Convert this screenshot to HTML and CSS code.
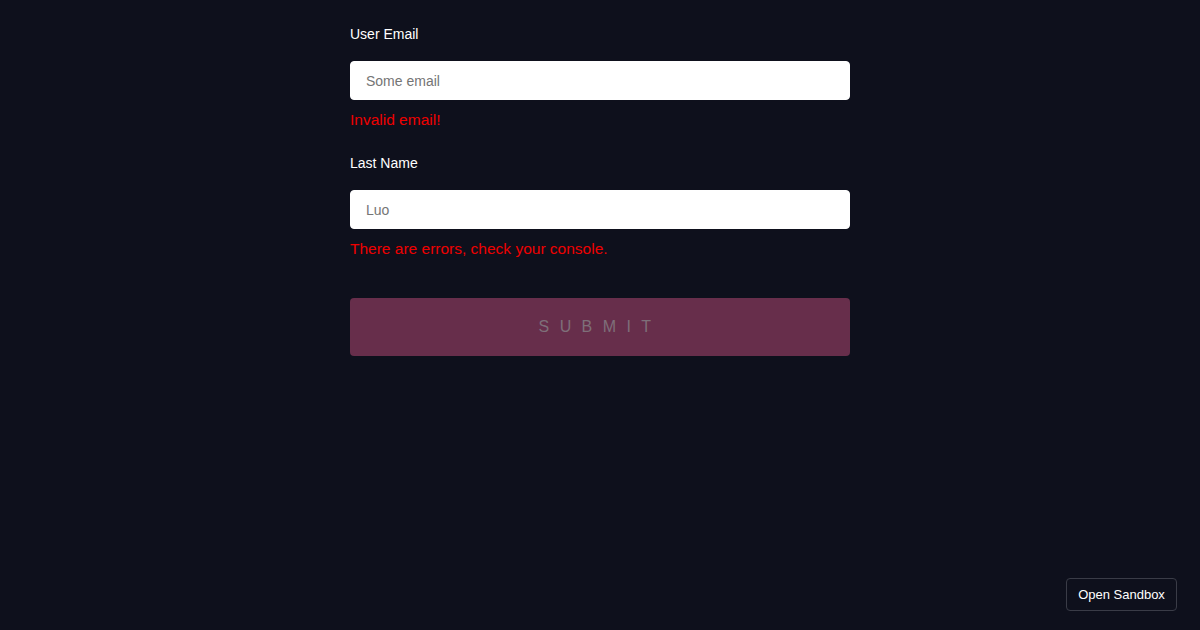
FILE: index.html
```html
<!DOCTYPE html>
<html>
<head>
<meta charset="utf-8">
<link rel="stylesheet" href="styles.css">
</head>
<body>
<form class="form">
  <label class="label">User Email</label>
  <input class="input" type="text" placeholder="Some email">
  <p class="error">Invalid email!</p>
  <label class="label">Last Name</label>
  <input class="input" type="text" placeholder="Luo">
  <p class="error">There are errors, check your console.</p>
  <button class="submit" type="button">Submit</button>
</form>
<button class="sandbox" type="button">Open Sandbox</button>
</body>
</html>
```
FILE: styles.css
```css
html, body {
  margin: 0;
  padding: 0;
  background: #0e101c;
  font-family: "Liberation Sans", Arial, sans-serif;
  height: 100%;
}
.form {
  width: 500px;
  margin: 0 auto;
  display: flex;
  flex-direction: column;
}
.label {
  display: block;
  color: #ffffff;
  font-size: 14px;
  line-height: 28px;
  margin-top: 20px;
  margin-bottom: 13px;
}
.input {
  display: block;
  box-sizing: border-box;
  width: 100%;
  height: 39px;
  border-radius: 4px;
  border: 1px solid #ffffff;
  background: #ffffff;
  padding: 10px 15px;
  margin: 0 0 10px 0;
  font-family: "Liberation Sans", Arial, sans-serif;
  font-size: 14px;
  color: #333;
  outline: none;
}
.input::placeholder {
  color: #757575;
}
.error {
  margin: 0;
  color: #ee0000;
  font-size: 15.5px;
  line-height: 19px;
}
.submit {
  margin-top: 40px;
  height: 58px;
  border: none;
  border-radius: 4px;
  background: #672e4b;
  color: #7e6f79;
  text-transform: uppercase;
  font-family: "Liberation Sans", Arial, sans-serif;
  font-size: 16px;
  font-weight: 300;
  letter-spacing: 10.4px;
  padding: 20px 0 20px 0;
}
.sandbox {
  position: fixed;
  right: 23px;
  bottom: 19px;
  width: 111px;
  height: 33px;
  box-sizing: border-box;
  background: #0e101c;
  border: 1px solid #3a3c47;
  border-radius: 4px;
  color: #ffffff;
  font-family: "Liberation Sans", Arial, sans-serif;
  font-size: 13px;
  padding: 0;
}
```
